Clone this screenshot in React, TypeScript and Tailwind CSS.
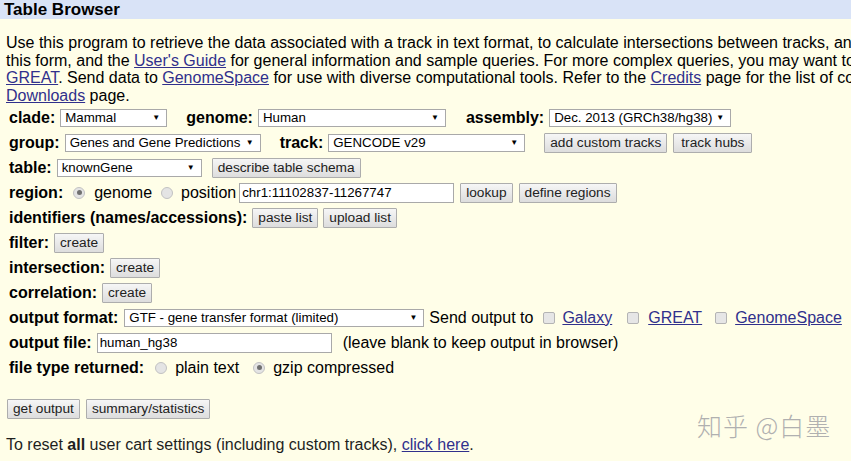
import type { ReactNode } from 'react'

const link = 'text-[#30308c] underline'

function Select({ value, className }: { value: string; className: string }) {
  return (
    <div
      className={`flex h-[18px] items-center justify-between border border-[#a9a9a9] bg-white pl-[4px] pr-[6px] text-[13.3px] leading-none text-black ${className}`}
    >
      <span className="whitespace-nowrap">{value}</span>
      <span className="text-[8px]">▼</span>
    </div>
  )
}

function Btn({ children, className = '' }: { children: ReactNode; className?: string }) {
  return (
    <button
      className={`h-[20px] whitespace-nowrap rounded-[1px] border border-[#adadad] bg-linear-to-b from-[#f6f6f6] to-[#dddddd] px-[5px] text-[13.7px] leading-none text-[#222] ${className}`}
    >
      {children}
    </button>
  )
}

function Input({ value, className }: { value: string; className: string }) {
  return (
    <div
      className={`flex h-[20px] items-center border border-[#a9a9a9] bg-white px-[2px] text-[13.3px] leading-none text-black ${className}`}
    >
      {value}
    </div>
  )
}

function Radio({ checked = false, className = '' }: { checked?: boolean; className?: string }) {
  return (
    <span
      className={`inline-flex h-[12px] w-[12px] shrink-0 items-center justify-center rounded-full border border-[#c2c2c2] bg-[#e4e4e4] ${className}`}
    >
      {checked && <span className="h-[5px] w-[5px] rounded-full bg-[#707070]" />}
    </span>
  )
}

function Check({ className = '' }: { className?: string }) {
  return (
    <span
      className={`inline-block h-[12px] w-[12px] shrink-0 rounded-[2px] border border-[#b4b4b4] bg-[#e6e6e6] ${className}`}
    />
  )
}

function Row({ children }: { children: ReactNode }) {
  return <div className="flex h-[25px] items-center whitespace-nowrap pl-[9px]">{children}</div>
}

function Label({ children }: { children: ReactNode }) {
  return <b className="text-[16px] font-bold">{children}</b>
}

export default function App() {
  return (
    <div className="relative h-[461px] w-[851px] overflow-hidden bg-[#fffee8] font-['Liberation_Sans',Arial,sans-serif] text-[16px] text-black">
      <div className="flex h-[19px] items-center bg-[#d9e3f7] pl-[4px] text-[17px] font-bold leading-none">
        Table Browser
      </div>

      <p className="w-[1400px] whitespace-nowrap pl-[6px] pt-[15px] leading-[17.5px]">
        Use this program to retrieve the data associated with a track in text format, to calculate
        intersections between tracks, and to retrieve DNA sequence covered by a track. For help in
        using this application see Using the Table Browser for a description of the controls in
        <br />
        this form, and the <span className={link}>User's Guide</span> for general information and
        sample queries. For more complex queries, you may want to use Galaxy or our public MySQL
        server.
        <br />
        <span className={link}>GREAT</span>. Send data to <span className={link}>GenomeSpace</span>{' '}
        for use with diverse computational tools. Refer to the <span className={link}>Credits</span>{' '}
        page for the list of contributors and usage restrictions associated with these tables.
        <br />
        <span className={link}>Downloads</span> page.
      </p>

      <div className="mt-[1px]">
        <Row>
          <Label>clade:</Label>
          <Select value="Mammal" className="ml-[5px] w-[107px]" />
          <span className="ml-[19px]">
            <Label>genome:</Label>
          </span>
          <Select value="Human" className="ml-[5px] w-[188px]" />
          <span className="ml-[20px]">
            <Label>assembly:</Label>
          </span>
          <Select value="Dec. 2013 (GRCh38/hg38)" className="ml-[5px] w-[182px]" />
        </Row>
        <Row>
          <Label>group:</Label>
          <Select value="Genes and Gene Predictions" className="ml-[5px] w-[196px]" />
          <span className="ml-[19px]">
            <Label>track:</Label>
          </span>
          <Select value="GENCODE v29" className="ml-[5px] w-[197px]" />
          <Btn className="ml-[19px]">add custom tracks</Btn>
          <Btn className="ml-[6px] px-[7px]">track hubs</Btn>
        </Row>
        <Row>
          <Label>table:</Label>
          <Select value="knownGene" className="ml-[5px] w-[145px]" />
          <Btn className="ml-[10px]">describe table schema</Btn>
        </Row>
        <Row>
          <Label>region:</Label>
          <Radio checked className="ml-[10px]" />
          <span className="ml-[9px]">genome</span>
          <Radio className="ml-[9px]" />
          <span className="ml-[8px]">position</span>
          <Input value="chr1:11102837-11267747" className="ml-[3px] w-[215px]" />
          <Btn className="ml-[6px]">lookup</Btn>
          <Btn className="ml-[6px]">define regions</Btn>
        </Row>
        <Row>
          <Label>identifiers (names/accessions):</Label>
          <Btn className="ml-[5px]">paste list</Btn>
          <Btn className="ml-[5px]">upload list</Btn>
        </Row>
        <Row>
          <Label>filter:</Label>
          <Btn className="ml-[5px]">create</Btn>
        </Row>
        <Row>
          <Label>intersection:</Label>
          <Btn className="ml-[5px]">create</Btn>
        </Row>
        <Row>
          <Label>correlation:</Label>
          <Btn className="ml-[5px]">create</Btn>
        </Row>
        <Row>
          <Label>output format:</Label>
          <Select value="GTF - gene transfer format (limited)" className="ml-[6px] w-[300px]" />
          <span className="ml-[5px]">Send output to</span>
          <Check className="ml-[10px]" />
          <span className={`ml-[7px] ${link}`}>Galaxy</span>
          <Check className="ml-[15px]" />
          <span className={`ml-[9px] ${link}`}>GREAT</span>
          <Check className="ml-[13px]" />
          <span className={`ml-[8px] ${link}`}>GenomeSpace</span>
        </Row>
        <Row>
          <Label>output file:</Label>
          <Input value="human_hg38" className="ml-[5px] w-[235px]" />
          <span className="ml-[11px]">(leave blank to keep output in browser)</span>
        </Row>
        <Row>
          <Label>file type returned:</Label>
          <Radio className="ml-[11px]" />
          <span className="ml-[8px]">plain text</span>
          <Radio checked className="ml-[14px]" />
          <span className="ml-[8px]">gzip compressed</span>
        </Row>
      </div>

      <div className="mt-[19px] flex gap-[6px] pl-[7px]">
        <Btn>get output</Btn>
        <Btn>summary/statistics</Btn>
      </div>

      <p className="mt-[17px] pl-[6px] leading-[18px] text-[#1e1e1e]">
        To reset <b>all</b> user cart settings (including custom tracks),{' '}
        <span className={link}>click here</span>.
      </p>

      <div className="absolute left-[697px] top-[413px] font-['Noto_Sans_CJK_SC',sans-serif] text-[25px] font-light leading-none tracking-[1px] text-[#b0b0b0]">
        知乎 @白墨
      </div>
    </div>
  )
}
